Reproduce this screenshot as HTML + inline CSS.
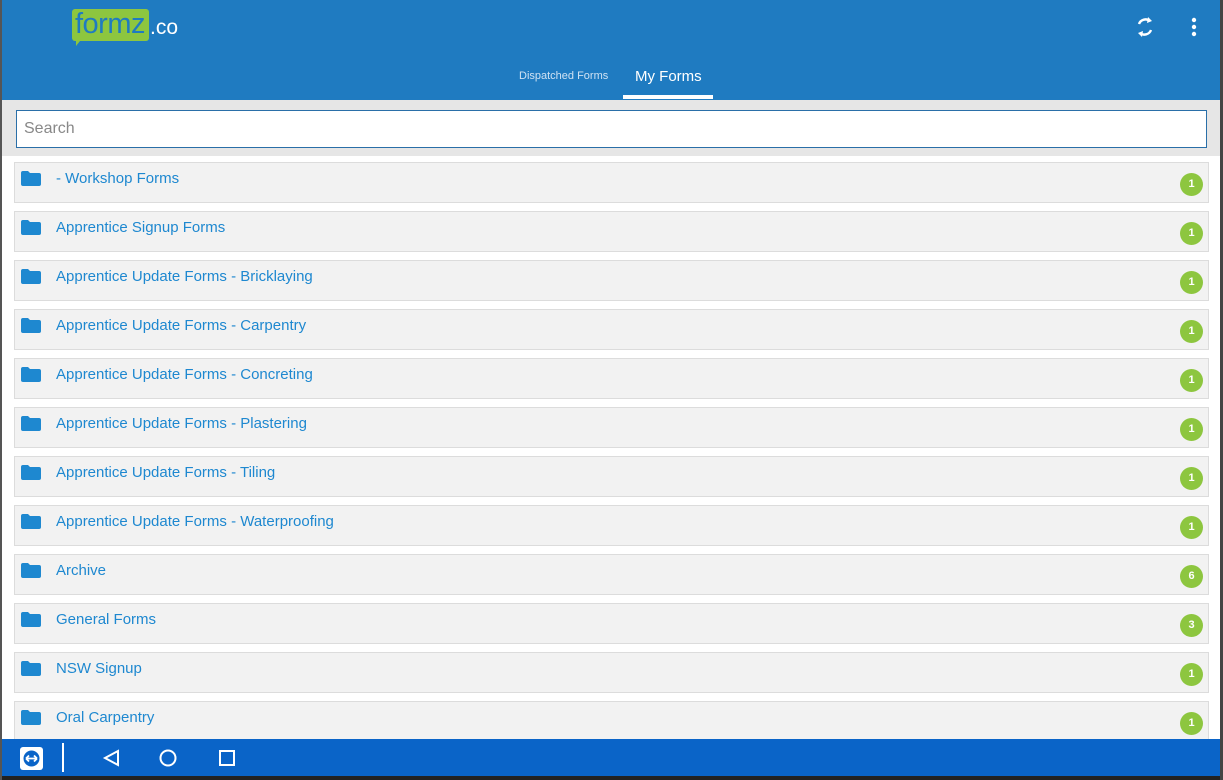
<!DOCTYPE html>
<html><head><meta charset="utf-8"><style>
*{margin:0;padding:0;box-sizing:border-box}
body{width:1223px;height:780px;overflow:hidden;background:#fff;font-family:"Liberation Sans",Roboto,sans-serif;position:relative}
.lb{position:absolute;left:0;top:0;width:2px;height:780px;background:#555}
.rb{position:absolute;right:0;top:0;width:3px;height:780px;background:#444}
.hdr{position:absolute;left:0;top:0;width:1223px;height:100px;background:#1f7bc1}
.logo{position:absolute;left:72px;top:9px;width:77px;height:32px;background:#8dc63f;border-radius:3px;color:#1f7bc1;font-size:29px;line-height:30px;padding-left:3px;letter-spacing:-0.5px}
.logo:after{content:"";position:absolute;left:4px;bottom:-5px;border-left:4px solid #8dc63f;border-bottom:5px solid transparent}
.co{position:absolute;left:150px;top:16px;color:#fff;font-size:21px}
.t1{position:absolute;left:519px;top:70px;color:#cfe2f3;font-size:11px}
.t2{position:absolute;left:635px;top:68px;color:#fff;font-size:15px}
.ul{position:absolute;left:623px;top:95px;width:90px;height:4px;background:#fff}
.sa{position:absolute;left:2px;top:100px;width:1218px;height:56px;background:#e6e6e6}
.sb{position:absolute;left:16px;top:110px;width:1191px;height:38px;background:#fff;border:1px solid #2a6fa8;color:#888;font-size:16px;padding:9px 0 0 7px}
.row{position:absolute;left:14px;width:1195px;height:41px;background:#f2f2f2;border:1px solid #dcdcdc}
.row span{position:absolute;left:41px;top:7px;color:#1e88d0;font-size:15px}
.fold{position:absolute;left:6px;top:8px;width:20px;height:15px}
.badge{position:absolute;left:1165px;top:10px;width:23px;height:23px;border-radius:50%;background:#8dc63f;color:#fff;font-size:11px;font-weight:bold;text-align:center;line-height:23px}
.nav{position:absolute;left:0;top:739px;width:1223px;height:37px;background:#0a64c8}
.blk{position:absolute;left:0;top:776px;width:1223px;height:4px;background:#222}
</style></head><body>
<div class="hdr">
<div class="logo">formz</div><div class="co">.co</div>
<svg style="position:absolute;left:1135px;top:16px" width="20" height="22" viewBox="0 0 20 22"><path d="M15 5A7 7 0 0 0 4 8" stroke="#fff" stroke-width="2.4" fill="none"/><path d="M13 1l4 4-5 2z" fill="#fff"/><path d="M5 17A7 7 0 0 0 16 14" stroke="#fff" stroke-width="2.4" fill="none"/><path d="M7 21l-4-4 5-2z" fill="#fff"/></svg>
<svg style="position:absolute;left:1190px;top:17px" width="8" height="20"><circle cx="4" cy="3" r="2.2" fill="#fff"/><circle cx="4" cy="10" r="2.2" fill="#fff"/><circle cx="4" cy="17" r="2.2" fill="#fff"/></svg>
<div class="t1">Dispatched Forms</div><div class="t2">My Forms</div><div class="ul"></div>
</div>
<div class="sa"></div>
<div class="sb">Search</div>
<div class="row" style="top:162px"><svg class="fold" viewBox="0 0 20 15"><path d="M0 2q0-2 2-2h5l2 2h9q2 0 2 2v9q0 2-2 2H2q-2 0-2-2z" fill="#1e88d0"/></svg><span>- Workshop Forms</span><div class="badge">1</div></div>
<div class="row" style="top:211px"><svg class="fold" viewBox="0 0 20 15"><path d="M0 2q0-2 2-2h5l2 2h9q2 0 2 2v9q0 2-2 2H2q-2 0-2-2z" fill="#1e88d0"/></svg><span>Apprentice Signup Forms</span><div class="badge">1</div></div>
<div class="row" style="top:260px"><svg class="fold" viewBox="0 0 20 15"><path d="M0 2q0-2 2-2h5l2 2h9q2 0 2 2v9q0 2-2 2H2q-2 0-2-2z" fill="#1e88d0"/></svg><span>Apprentice Update Forms - Bricklaying</span><div class="badge">1</div></div>
<div class="row" style="top:309px"><svg class="fold" viewBox="0 0 20 15"><path d="M0 2q0-2 2-2h5l2 2h9q2 0 2 2v9q0 2-2 2H2q-2 0-2-2z" fill="#1e88d0"/></svg><span>Apprentice Update Forms - Carpentry</span><div class="badge">1</div></div>
<div class="row" style="top:358px"><svg class="fold" viewBox="0 0 20 15"><path d="M0 2q0-2 2-2h5l2 2h9q2 0 2 2v9q0 2-2 2H2q-2 0-2-2z" fill="#1e88d0"/></svg><span>Apprentice Update Forms - Concreting</span><div class="badge">1</div></div>
<div class="row" style="top:407px"><svg class="fold" viewBox="0 0 20 15"><path d="M0 2q0-2 2-2h5l2 2h9q2 0 2 2v9q0 2-2 2H2q-2 0-2-2z" fill="#1e88d0"/></svg><span>Apprentice Update Forms - Plastering</span><div class="badge">1</div></div>
<div class="row" style="top:456px"><svg class="fold" viewBox="0 0 20 15"><path d="M0 2q0-2 2-2h5l2 2h9q2 0 2 2v9q0 2-2 2H2q-2 0-2-2z" fill="#1e88d0"/></svg><span>Apprentice Update Forms - Tiling</span><div class="badge">1</div></div>
<div class="row" style="top:505px"><svg class="fold" viewBox="0 0 20 15"><path d="M0 2q0-2 2-2h5l2 2h9q2 0 2 2v9q0 2-2 2H2q-2 0-2-2z" fill="#1e88d0"/></svg><span>Apprentice Update Forms - Waterproofing</span><div class="badge">1</div></div>
<div class="row" style="top:554px"><svg class="fold" viewBox="0 0 20 15"><path d="M0 2q0-2 2-2h5l2 2h9q2 0 2 2v9q0 2-2 2H2q-2 0-2-2z" fill="#1e88d0"/></svg><span>Archive</span><div class="badge">6</div></div>
<div class="row" style="top:603px"><svg class="fold" viewBox="0 0 20 15"><path d="M0 2q0-2 2-2h5l2 2h9q2 0 2 2v9q0 2-2 2H2q-2 0-2-2z" fill="#1e88d0"/></svg><span>General Forms</span><div class="badge">3</div></div>
<div class="row" style="top:652px"><svg class="fold" viewBox="0 0 20 15"><path d="M0 2q0-2 2-2h5l2 2h9q2 0 2 2v9q0 2-2 2H2q-2 0-2-2z" fill="#1e88d0"/></svg><span>NSW Signup</span><div class="badge">1</div></div>
<div class="row" style="top:701px"><svg class="fold" viewBox="0 0 20 15"><path d="M0 2q0-2 2-2h5l2 2h9q2 0 2 2v9q0 2-2 2H2q-2 0-2-2z" fill="#1e88d0"/></svg><span>Oral Carpentry</span><div class="badge">1</div></div>
<div class="nav">
<svg style="position:absolute;left:20px;top:8px" width="23" height="23"><rect width="23" height="23" rx="3" fill="#fff"/><circle cx="11.5" cy="11.5" r="8" fill="#0a64c8"/><path d="M6 11.5h11M6 11.5l3-3M6 11.5l3 3M17 11.5l-3-3M17 11.5l-3 3" stroke="#fff" stroke-width="1.8" fill="none"/></svg>
<div style="position:absolute;left:62px;top:4px;width:2px;height:29px;background:#fff"></div>
<svg style="position:absolute;left:102px;top:10px" width="18" height="18"><path d="M16 2L3 9l13 7z" stroke="#fff" stroke-width="2" fill="none"/></svg>
<svg style="position:absolute;left:159px;top:10px" width="18" height="18"><circle cx="9" cy="9" r="7.5" stroke="#fff" stroke-width="2" fill="none"/></svg>
<svg style="position:absolute;left:218px;top:10px" width="18" height="18"><rect x="2" y="2" width="14" height="14" stroke="#fff" stroke-width="2" fill="none"/></svg>
</div>
<div class="blk"></div>
<div class="lb"></div><div class="rb"></div>
</body></html>
